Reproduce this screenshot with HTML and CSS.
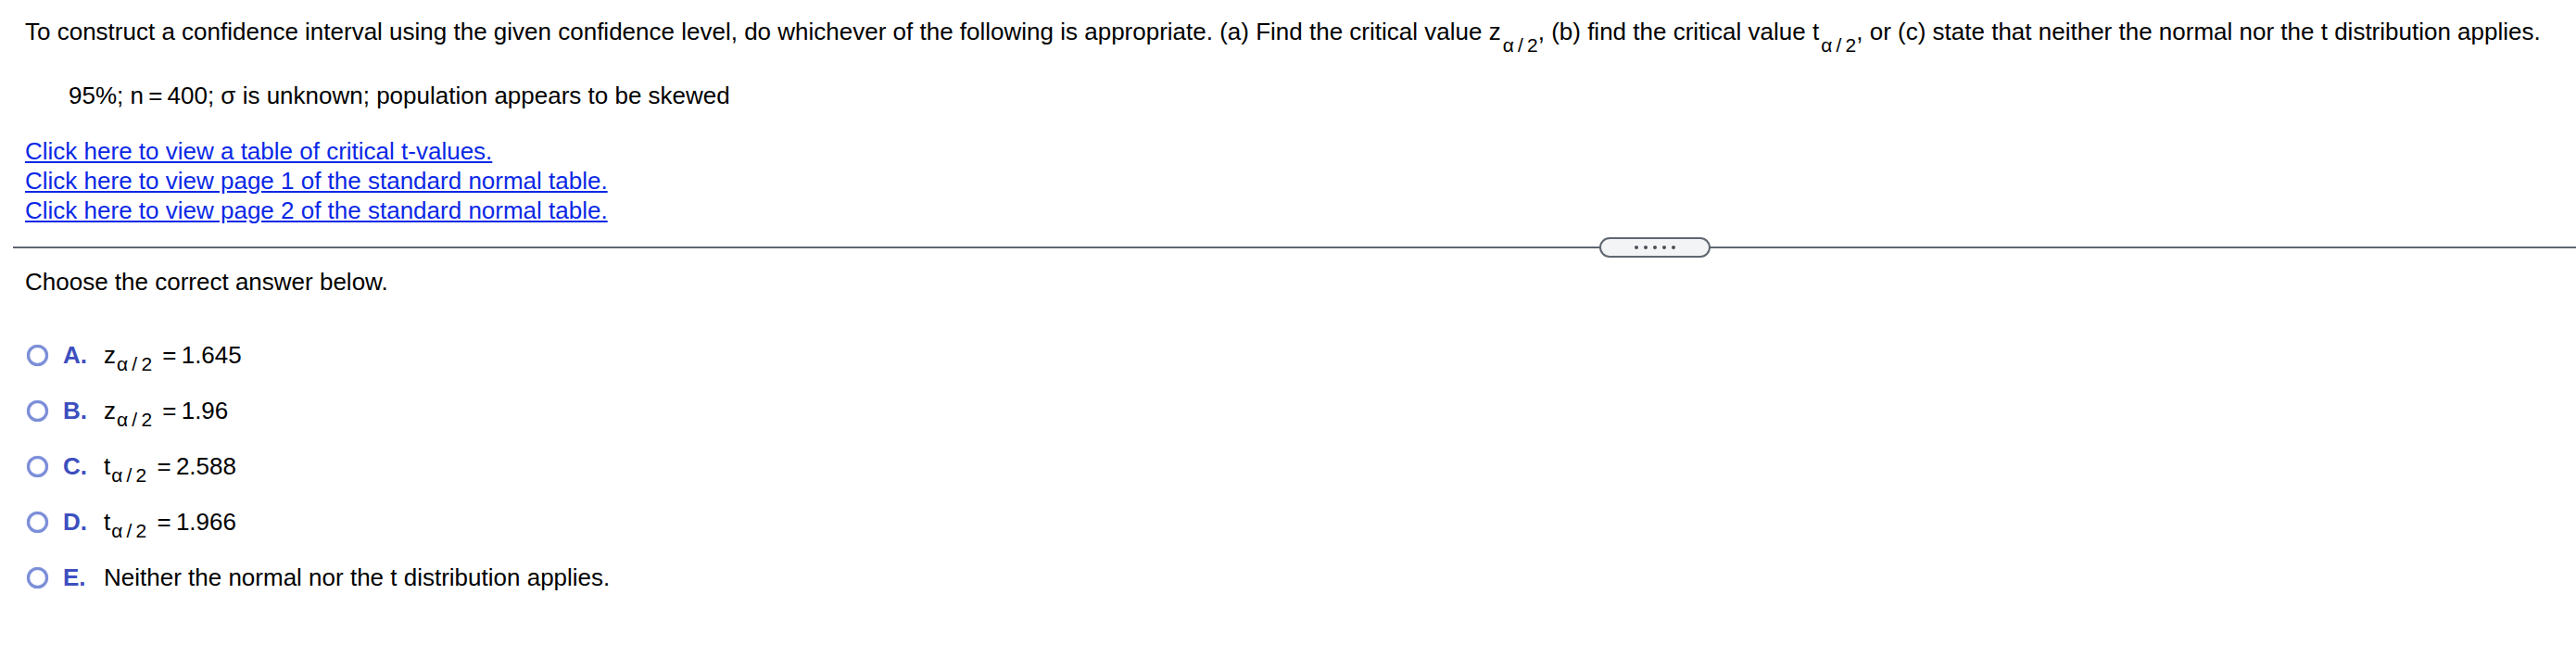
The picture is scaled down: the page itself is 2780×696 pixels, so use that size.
FILE: index.html
```html
<!DOCTYPE html>
<html lang="en">
<head>
<meta charset="utf-8">
<title>Confidence interval question</title>
<link rel="stylesheet" href="styles.css">
</head>
<body>
<div class="page">
  <p class="question">To construct a confidence interval using the given confidence level, do whichever of the following is appropriate. (a) Find the critical value z<sub class="qsub">α&thinsp;/&thinsp;2</sub>, (b) find the critical value t<sub class="qsub">α&thinsp;/&thinsp;2</sub>, or (c) state that neither the normal nor the t distribution applies.</p>
  <p class="given">95%; n&thinsp;=&thinsp;400; σ is unknown; population appears to be skewed</p>
  <div class="links">
    <a href="#">Click here to view a table of critical t-values.</a>
    <a href="#">Click here to view page 1 of the standard normal table.</a>
    <a href="#">Click here to view page 2 of the standard normal table.</a>
  </div>
  <div class="divider">
    <span class="pill"><i class="dot"></i><i class="dot"></i><i class="dot"></i><i class="dot"></i><i class="dot"></i></span>
  </div>
  <p class="prompt">Choose the correct answer below.</p>
  <ul class="options">
    <li class="option"><span class="radio"></span><span class="letter">A.</span><span class="expr">z<sub class="osub">α&thinsp;/&thinsp;2</sub> =&thinsp;1.645</span></li>
    <li class="option"><span class="radio"></span><span class="letter">B.</span><span class="expr">z<sub class="osub">α&thinsp;/&thinsp;2</sub> =&thinsp;1.96</span></li>
    <li class="option"><span class="radio"></span><span class="letter">C.</span><span class="expr">t<sub class="osub">α&thinsp;/&thinsp;2</sub> =&thinsp;2.588</span></li>
    <li class="option"><span class="radio"></span><span class="letter">D.</span><span class="expr">t<sub class="osub">α&thinsp;/&thinsp;2</sub> =&thinsp;1.966</span></li>
    <li class="option"><span class="radio"></span><span class="letter">E.</span><span class="expr">Neither the normal nor the t distribution applies.</span></li>
  </ul>
</div>
</body>
</html>
```

FILE: styles.css
```css
html, body {
  margin: 0;
  padding: 0;
  background: #ffffff;
}

body {
  font-family: "Liberation Sans", Arial, sans-serif;
  font-size: 26px;
  color: #000000;
}

.page {
  padding-left: 14px;
  overflow: hidden;
}

.question {
  margin: 19px 0 0;
  padding-left: 13px;
  line-height: 30px;
  white-space: nowrap;
}

.qsub {
  font-size: 21px;
  line-height: 0;
  margin-left: 2px;
  vertical-align: -13px;
}

.given {
  margin: 39px 0 0;
  padding-left: 60px;
  line-height: 30px;
}

.links {
  margin-top: 29px;
  padding-left: 13px;
  display: flex;
  flex-direction: column;
  align-items: flex-start;
  line-height: 32px;
}

.links a {
  color: #0a28e6;
  text-decoration: underline;
  text-underline-offset: 2px;
}

.divider {
  position: relative;
  margin-top: 23px;
  height: 2px;
  background: #5f6771;
}

.pill {
  position: absolute;
  left: 1712px;
  top: -10px;
  width: 120px;
  height: 22px;
  box-sizing: border-box;
  border: 2px solid #5f6771;
  border-radius: 11px;
  background: #f3f4f6;
  display: flex;
  align-items: center;
  justify-content: center;
  gap: 6px;
}

.dot {
  display: block;
  width: 4px;
  height: 4px;
  border-radius: 50%;
  background: #4a4f57;
}

.prompt {
  margin: 21px 0 0;
  padding-left: 13px;
  line-height: 30px;
}

.options {
  list-style: none;
  margin: 49px 0 0;
  padding: 0 0 0 15px;
  display: flex;
  flex-direction: column;
  gap: 30px;
}

.option {
  display: flex;
  align-items: flex-start;
  height: 30px;
  line-height: 30px;
}

.radio {
  flex: none;
  width: 23px;
  height: 23px;
  margin-top: 4px;
  box-sizing: border-box;
  border: 3px solid #7b8ed9;
  border-radius: 50%;
  background: #ffffff;
  box-shadow: inset 0 0 1px rgba(60, 80, 180, 0.5), 0 0 1px rgba(60, 80, 180, 0.5);
}

.letter {
  flex: none;
  width: 44px;
  margin-left: 16px;
  font-weight: bold;
  color: #3d4fbf;
}

.expr {
  white-space: nowrap;
}

.osub {
  font-size: 21px;
  line-height: 0;
  margin-left: 1px;
  margin-right: 4px;
  vertical-align: -8px;
}
```
